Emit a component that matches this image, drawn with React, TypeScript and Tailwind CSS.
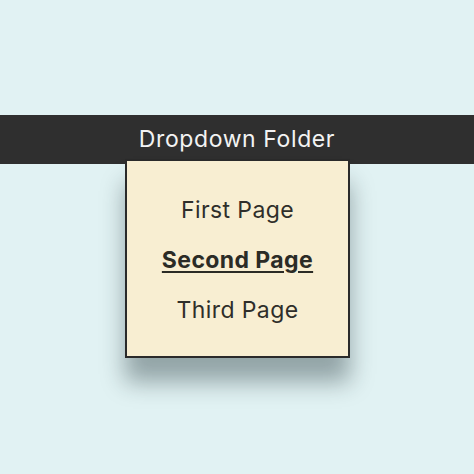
import React from "react";

const pages = [
  { label: "First Page", active: false },
  { label: "Second Page", active: true },
  { label: "Third Page", active: false },
];

export default function App() {
  return (
    <div
      className="w-[474px] h-[474px] bg-[#e1f2f3] flex flex-col pt-[115px]"
      style={{ fontFamily: "Inter, 'Noto Sans', sans-serif" }}
    >
      {/* Barra superior */}
      <div className="h-[49px] bg-[#2f2f2f] flex justify-center items-center">
        <span className="text-[23px] text-[#f3f3f3] tracking-[0.6px]">
          Dropdown Folder
        </span>
      </div>

      {/* Menú desplegable */}
      <div className="-mt-[5px] ml-[125px] w-[225px] h-[199px] bg-[#f8eed2] border-2 border-[#2a2a2a] shadow-[0_24px_22px_rgba(20,40,45,0.38)] flex flex-col items-center pt-[35px] gap-[22px]">
        {pages.map((p) => (
          <span
            key={p.label}
            className={
              p.active
                ? "text-[23px] leading-[28px] font-bold text-[#2b2b26] tracking-[0.4px] underline underline-offset-[3px] decoration-2"
                : "text-[23px] leading-[28px] text-[#2f2e2a] tracking-[0.4px]"
            }
          >
            {p.label}
          </span>
        ))}
      </div>
    </div>
  );
}
